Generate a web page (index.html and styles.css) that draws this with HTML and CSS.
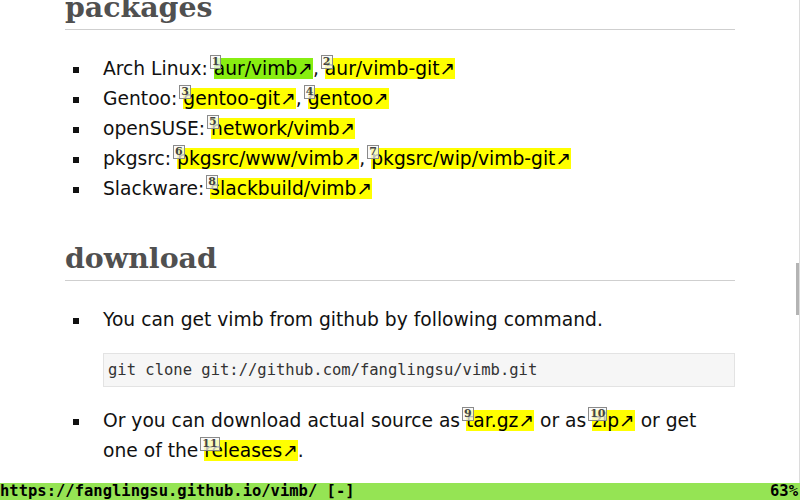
FILE: index.html
```html
<!DOCTYPE html>
<html>
<head>
<meta charset="utf-8">
<link rel="stylesheet" href="styles.css">
</head>
<body>
<div class="screen">
  <div class="viewport">
    <main class="doc">
      <h2 class="sec first">packages</h2>
      <ul class="list">
        <li>Arch Linux: <a class="link focus"><span class="hint">1</span>aur/vimb↗</a>, <a class="link"><span class="hint">2</span>aur/vimb-git↗</a></li>
        <li>Gentoo: <a class="link"><span class="hint">3</span>gentoo-git↗</a>, <a class="link"><span class="hint">4</span>gentoo↗</a></li>
        <li>openSUSE: <a class="link"><span class="hint">5</span>network/vimb↗</a></li>
        <li>pkgsrc: <a class="link"><span class="hint">6</span>pkgsrc/www/vimb↗</a>, <a class="link"><span class="hint">7</span>pkgsrc/wip/vimb-git↗</a></li>
        <li>Slackware: <a class="link"><span class="hint">8</span>slackbuild/vimb↗</a></li>
      </ul>
      <h2 class="sec">download</h2>
      <ul class="list">
        <li>You can get vimb from github by following command.<pre class="code">git clone git://github.com/fanglingsu/vimb.git</pre></li>
        <li>Or you can download actual source as <a class="link"><span class="hint">9</span>tar.gz↗</a> or as <a class="link"><span class="hint">10</span>zip↗</a> or get one of the <a class="link"><span class="hint">11</span>releases↗</a>.</li>
      </ul>
    </main>
    <div class="scrollbar"><div class="thumb"></div></div>
  </div>
  <div class="status"><span>https://fanglingsu.github.io/vimb/ [-]</span><span>63%</span></div>
</div>
</body>
</html>
```
FILE: styles.css
```css
html, body {
  margin: 0;
  padding: 0;
  background: #fff;
}
.screen {
  width: 800px;
  height: 500px;
  display: flex;
  flex-direction: column;
  overflow: hidden;
}
.viewport {
  height: 483px;
  display: flex;
  overflow: hidden;
}
.doc {
  flex: none;
  width: 670px;
  margin: -10px 0 0 65px;
  font-family: "DejaVu Sans", sans-serif;
  font-size: 18.7px;
  color: #111;
}
.sec {
  margin: 37px 0 0;
  font-family: "DejaVu Serif", serif;
  font-weight: bold;
  font-size: 28.4px;
  line-height: 34px;
  color: #505050;
  padding-bottom: 5px;
  border-bottom: 1px solid #cfcfcf;
}
.sec.first {
  margin-top: 0;
}
.list {
  margin: 24px 0 0;
  padding-left: 38px;
  list-style: none;
  line-height: 30px;
}
.list li::before {
  content: "";
  display: inline-block;
  width: 6px;
  height: 6px;
  background: #111;
  margin-left: -30px;
  margin-right: 24px;
  vertical-align: 2px;
}
.link {
  position: relative;
  background: #ffff00;
  color: #000;
}
.link.focus {
  background: #88ee11;
}
.hint {
  position: absolute;
  left: -4px;
  top: -3px;
  font-family: "DejaVu Serif", serif;
  font-weight: bold;
  font-size: 11px;
  line-height: 12px;
  padding: 0 1px;
  color: #444;
  background: rgba(248, 248, 248, 0.75);
  border: 1px solid #8a8a8a;
}
.code {
  margin: 18px 0 19px;
  padding: 7px 4px;
  background: #f6f6f6;
  border: 1px solid #e3e3e3;
  font-family: "DejaVu Sans Mono", monospace;
  font-size: 15.5px;
  line-height: 18px;
  color: #333;
}
.scrollbar {
  margin-left: auto;
  width: 4px;
  border-right: 1px solid #dcdcdc;
  box-sizing: border-box;
}
.thumb {
  margin-top: 263px;
  width: 3px;
  height: 52px;
  background: #b4b4b4;
}
.status {
  height: 17px;
  background: #95e454;
  display: flex;
  justify-content: space-between;
  align-items: center;
  font-family: "DejaVu Sans Mono", monospace;
  font-weight: bold;
  font-size: 15.5px;
  line-height: 17px;
  color: #000;
  padding-right: 2px;
}
```
